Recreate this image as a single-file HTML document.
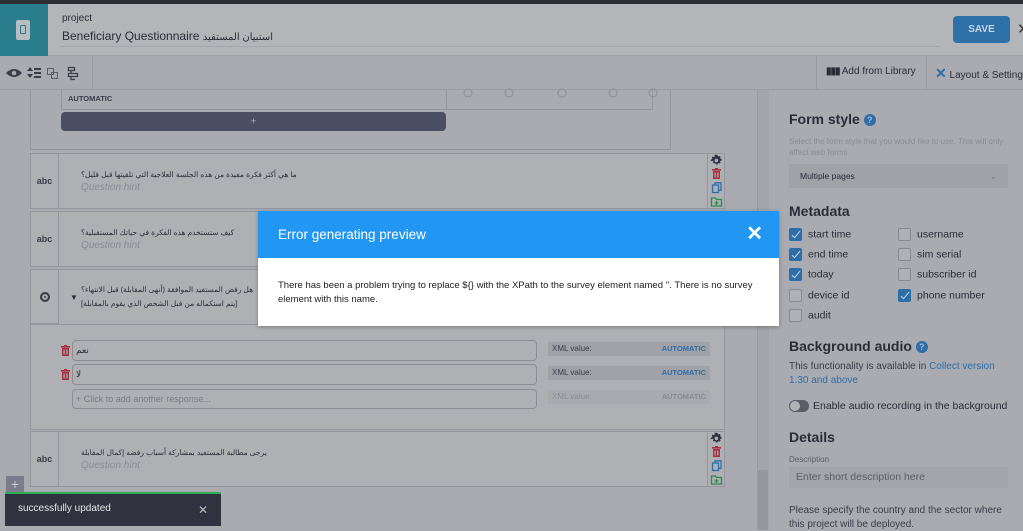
<!DOCTYPE html>
<html><head><meta charset="utf-8"><style>
*{box-sizing:border-box;margin:0;padding:0}
body{width:1023px;height:530px;overflow:hidden;position:relative;background:#a9abb0;font-family:"Liberation Sans","Noto Sans CJK SC",sans-serif;color:#2a2d38}
.a{position:absolute}
.card{position:absolute;left:30px;width:695px;background:#afb0b4;border:1px solid #95979f}
.card .t{position:absolute;left:0;top:0;bottom:0;width:28px;border-right:1px solid #95979f;font-size:9px;font-weight:bold;display:flex;align-items:center;justify-content:center;color:#3a3d48}
.q{position:absolute;left:50px;font-size:7.5px;color:#2a2d38;direction:rtl;white-space:nowrap}
.h{position:absolute;left:50px;font-size:10px;font-style:italic;color:#8a8c94}
.ic{position:absolute;right:0;top:0;bottom:0;width:17px;border-left:1px solid #95979f}
.cb{display:inline-block;width:13px;height:13px;border:1px solid #888a92;border-radius:2px;background:#b0b1b6;vertical-align:middle;margin-right:6px;position:relative}
.cb.on{background:#2d6ea8;border-color:#2d6ea8}
.cb.on:after{content:"";position:absolute;left:4px;top:0px;width:3px;height:8px;border:solid #c8d8e8;border-width:0 1.5px 1.5px 0;transform:rotate(40deg)}
.m{position:absolute;font-size:10.5px;color:#2a2d38}
.inp{position:absolute;left:72px;width:465px;height:21px;border:1px solid #8c8e96;border-radius:4px;background:#afb0b4;font-size:9px;padding:4px 3px}
.xml{position:absolute;left:548px;width:162px;height:14px;background:#a0a2a8;font-size:8px;padding:2px 4px;color:#3a3d48}
.xml b{float:right;color:#2d6ea8;font-size:7.5px}
.tr{position:absolute;left:60px}
</style></head><body>
<svg width="0" height="0" style="position:absolute"><defs>
<g id="icons">
<path d="M8.5 1l1 .2.3 1.4 1 .5 1.2-.8 1.4 1.4-.8 1.2.5 1 1.4.3v2l-1.4.3-.5 1 .8 1.2-1.4 1.4-1.2-.8-1 .5-.3 1.4h-2l-.3-1.4-1-.5-1.2.8-1.4-1.4.8-1.2-.5-1L1 9V7l1.4-.3.5-1-.8-1.2 1.4-1.4 1.2.8 1-.5L6 1z" transform="translate(1,0) scale(0.8)" fill="#2f3240"/>
<circle cx="7.4" cy="6.4" r="1.8" fill="#afb0b4"/>
<g transform="translate(0,14)" fill="#a8303c"><rect x="3" y="1" width="9" height="1.6"/><rect x="6" y="0" width="3" height="1.2"/><rect x="4" y="3" width="7" height="8"/><rect x="5.5" y="4.5" width="1.2" height="5" fill="#afb0b4"/><rect x="8.3" y="4.5" width="1.2" height="5" fill="#afb0b4"/></g>
<g transform="translate(0,28)" fill="none" stroke="#2d6ea8" stroke-width="1.3"><rect x="3.5" y="3" width="6" height="7.5"/><path d="M6 3V0.8h6v7.5h-2.5"/></g>
<g transform="translate(0,42)" fill="none" stroke="#2e8a4a" stroke-width="1.3"><path d="M2.5 2h4l1 1.5h5v6.5h-10z"/><path d="M7.5 5v4M5.5 7h4"/></g>
</g></defs></svg>
<div class="a" style="left:0;top:0;width:1023px;height:4px;background:#2c2e33"></div>
<div class="a" style="left:0;top:4px;width:1023px;height:52px;background:#b4b5b9;border-bottom:1px solid #9fa1a7"></div>
<div class="a" style="left:0;top:4px;width:48px;height:52px;background:#2a7d8c"></div>
<div class="a" style="left:16px;top:20px;width:14px;height:20px;background:#b9bcc0;border-radius:2px"></div>
<div class="a" style="left:20px;top:25px;width:6px;height:9px;border:1.5px solid #2a7d8c;border-radius:1px"></div>
<div class="a" style="left:62px;top:13px;font-size:10px">project</div>
<div class="a" style="left:62px;top:29px;font-size:12px">Beneficiary Questionnaire <span style="font-size:10px">استبيان المستفيد</span></div>
<div class="a" style="left:60px;top:46px;width:880px;height:1px;background:#a6a8ae"></div>
<div class="a" style="left:953px;top:16px;width:57px;height:27px;background:#2d71a8;border-radius:4px;color:#c8d6e4;font-size:10px;font-weight:bold;text-align:center;line-height:27px">SAVE</div>
<div class="a" style="left:1017px;top:20px;font-size:15px;color:#333">✕</div>
<div class="a" style="left:0;top:56px;width:1023px;height:34px;background:#a9abb1;border-bottom:1px solid #9a9ca3"></div>
<div class="a" style="left:92px;top:56px;width:1px;height:34px;background:#9a9ca3"></div>
<div class="a" style="left:816px;top:56px;width:1px;height:34px;background:#9a9ca3"></div>
<div class="a" style="left:926px;top:56px;width:1px;height:34px;background:#9a9ca3"></div>
<svg class="a" style="left:5px;top:65px" width="80" height="16"><path d="M1 8Q9 0 17 8Q9 16 1 8z" fill="#3a3d48"/><circle cx="9" cy="8" r="2.3" fill="#a9abb1"/><path d="M22 6l3-4 3 4zM22 9l3 4 3-4z" fill="#3a3d48"/><rect x="29" y="3" width="7" height="2" fill="#3a3d48"/><rect x="29" y="7" width="7" height="2" fill="#3a3d48"/><rect x="29" y="11" width="7" height="2" fill="#3a3d48"/><rect x="42.5" y="3.5" width="6" height="6" fill="none" stroke="#5a5d68"/><rect x="46.5" y="7.5" width="6" height="6" fill="none" stroke="#5a5d68"/><path d="M63.5 2.5h6v3h-6zM66 5.5v3M63.5 8.5h9v3h-9zM66 11.5v3h4" fill="none" stroke="#3a3d48" stroke-width="1.3"/></svg>
<div class="a" style="left:826px;top:66px;font-size:10px;white-space:nowrap"><span style="font-weight:bold;letter-spacing:-1px">▮▮▮</span> Add from Library</div>
<div class="a" style="left:935px;top:65px;font-size:10px;white-space:nowrap"><span style="color:#2d6ea8;font-size:14px;font-weight:bold">✕</span> Layout &amp; Settings</div>

<!-- canvas -->
<div class="a" style="left:30px;top:90px;width:1px;height:60px;background:#95979f"></div>
<div class="a" style="left:30px;top:149px;width:640px;height:1px;background:#95979f"></div>
<div class="a" style="left:670px;top:90px;width:1px;height:60px;background:#95979f"></div>
<div class="a" style="left:61px;top:90px;width:386px;height:20px;border:1px solid #95979f;border-top:none;font-size:7.5px;font-weight:bold;padding:4px 6px;color:#3a3d48">AUTOMATIC</div>
<div class="a" style="left:447px;top:109px;width:205px;height:1px;background:#95979f"></div>
<div class="a" style="left:652px;top:90px;width:1px;height:20px;background:#95979f"></div>
<svg class="a" style="left:460px;top:88px" width="200" height="10"><g fill="none" stroke="#8c8e96"><circle cx="8" cy="5" r="4"/><circle cx="49" cy="5" r="4"/><circle cx="102" cy="5" r="4"/><circle cx="153" cy="5" r="4"/><circle cx="193" cy="5" r="4"/></g></svg>
<div class="a" style="left:61px;top:112px;width:385px;height:19px;background:#4a4f63;border-radius:4px;color:#bbb;text-align:center;font-size:9px;line-height:19px">+</div>

<div class="card" style="top:153px;height:56px"><div class="t">abc</div>
<div class="q" style="top:16px">ما هي أكثر فكرة مفيدة من هذه الجلسة العلاجية التي تلقيتها قبل قليل؟</div>
<div class="h" style="top:28px">Question hint</div>
<div class="ic"><svg width="17" height="56"><use href="#icons" transform="translate(1,0)"/></svg></div></div>
<div class="card" style="top:211px;height:56px"><div class="t">abc</div>
<div class="q" style="top:16px">كيف ستستخدم هذه الفكرة في حياتك المستقبلية؟</div>
<div class="h" style="top:28px">Question hint</div></div>
<div class="card" style="top:269px;height:161px"><div class="t" style="bottom:auto;height:54px;border-bottom:1px solid #95979f"><span style="display:inline-block;width:10px;height:10px;border-radius:50%;background:#3a3d48;border:2px solid #3a3d48;box-shadow:inset 0 0 0 2px #afb0b4"></span></div>
<div class="a" style="left:0;top:54px;width:693px;height:1px;background:#95979f"></div>
<div class="a" style="left:39px;top:23px;font-size:8px">▼</div>
<div class="q" style="top:15px">هل رفض المستفيد الموافقة (أنهى المقابلة) قبل الانتهاء؟</div>
<div class="q" style="top:29px">[يتم استكماله من قبل الشخص الذي يقوم بالمقابلة]</div>
</div>
<svg class="tr" style="top:345px" width="12" height="14"><use href="#icons" transform="translate(-2,-14)"/></svg>
<svg class="tr" style="top:369px" width="12" height="14"><use href="#icons" transform="translate(-2,-14)"/></svg>
<div class="inp" style="top:340px">نعم</div>
<div class="inp" style="top:364px">لا</div>
<div class="inp" style="top:389px;height:20px;color:#7a7c84;font-size:9px">+ Click to add another response...</div>
<div class="xml" style="top:342px">XML value: <b>AUTOMATIC</b></div>
<div class="xml" style="top:366px">XML value: <b>AUTOMATIC</b></div>
<div class="xml" style="top:390px;background:#a8aab0;color:#8a8c94">XML value: <b style="color:#8a8c94">AUTOMATIC</b></div>
<div class="card" style="top:431px;height:56px"><div class="t">abc</div>
<div class="q" style="top:16px">يرجى مطالبة المستفيد بمشاركة أسباب رفضه إكمال المقابلة</div>
<div class="h" style="top:28px">Question hint</div>
<div class="ic"><svg width="17" height="56"><use href="#icons" transform="translate(1,0)"/></svg></div></div>
<div class="a" style="left:757px;top:90px;width:12px;height:440px;background:#a3a5ab;border-left:1px solid #999ba2"></div>
<div class="a" style="left:758px;top:470px;width:10px;height:60px;background:#95979e"></div>
<div class="a" style="left:6px;top:476px;width:18px;height:16px;background:#7b7e89;color:#c8c8cc;text-align:center;font-size:14px;line-height:16px">+</div>
<div class="a" style="left:5px;top:492px;width:216px;height:34px;background:#30333f;border-top:2px solid #2fae5a;color:#e5e5e8;font-size:10px;padding:9px 13px">successfully updated<span style="float:right;font-size:12px;color:#bbb">✕</span></div>

<!-- right panel -->
<div class="a" style="left:789px;top:111px;font-size:14px;font-weight:bold">Form style <span style="display:inline-block;width:12px;height:12px;border-radius:50%;background:#2d6ea8;color:#b0b8c4;font-size:9px;text-align:center;line-height:12px;vertical-align:1px">?</span></div>
<div class="a" style="left:789px;top:136px;width:225px;font-size:8px;line-height:11px;color:#8a8c94">Select the form style that you would like to use. This will only affect web forms</div>
<div class="a" style="left:789px;top:164px;width:219px;height:24px;background:#a0a2a8;font-size:8.5px;padding:7px 11px">Multiple pages<span style="float:right;color:#7a7c84">⌄</span></div>
<div class="a" style="left:789px;top:203px;font-size:14px;font-weight:bold">Metadata</div>
<div class="m" style="left:789px;top:228px"><span class="cb on"></span>start time</div>
<div class="m" style="left:789px;top:248px"><span class="cb on"></span>end time</div>
<div class="m" style="left:789px;top:268px"><span class="cb on"></span>today</div>
<div class="m" style="left:789px;top:289px"><span class="cb"></span>device id</div>
<div class="m" style="left:789px;top:309px"><span class="cb"></span>audit</div>
<div class="m" style="left:898px;top:228px"><span class="cb"></span>username</div>
<div class="m" style="left:898px;top:248px"><span class="cb"></span>sim serial</div>
<div class="m" style="left:898px;top:268px"><span class="cb"></span>subscriber id</div>
<div class="m" style="left:898px;top:289px"><span class="cb on"></span>phone number</div>
<div class="a" style="left:789px;top:338px;font-size:14px;font-weight:bold">Background audio <span style="display:inline-block;width:12px;height:12px;border-radius:50%;background:#2d6ea8;color:#b0b8c4;font-size:9px;text-align:center;line-height:12px;vertical-align:1px">?</span></div>
<div class="a" style="left:789px;top:360px;width:225px;font-size:10px;line-height:13.5px;color:#3a3d48">This functionality is available in <span style="color:#2d6ea8">Collect version 1.30 and above</span></div>
<div class="a" style="left:789px;top:400px;width:20px;height:12px;border-radius:6px;background:#5a5d68"></div>
<div class="a" style="left:790px;top:401px;width:10px;height:10px;border-radius:50%;background:#b0b2b6"></div>
<div class="a" style="left:813px;top:400px;font-size:10.5px">Enable audio recording in the background</div>
<div class="a" style="left:789px;top:429px;font-size:14px;font-weight:bold">Details</div>
<div class="a" style="left:789px;top:455px;font-size:8px;color:#5a5d68">Description</div>
<div class="a" style="left:789px;top:467px;width:219px;height:21px;background:#a3a5ab;font-size:10.5px;padding:4px 7px;color:#5a5d68">Enter short description here</div>
<div class="a" style="left:789px;top:504px;width:225px;font-size:10px;line-height:13.5px;color:#3a3d48">Please specify the country and the sector where this project will be deployed.</div>

<!-- modal -->
<div class="a" style="left:258px;top:211px;width:521px;height:115px;background:#fff;box-shadow:0 1px 4px rgba(0,0,0,.3)">
<div style="height:47px;background:#2196f3;color:#fff;font-size:13.5px;padding:16px 20px;position:relative">Error generating preview<span style="position:absolute;right:16px;top:10px;font-size:20px;font-weight:bold">✕</span></div>
<div style="padding:21px 20px 0;font-size:9.5px;line-height:14px;color:#222">There has been a problem trying to replace ${} with the XPath to the survey element named ''. There is no survey element with this name.</div>
</div>
</body></html>
